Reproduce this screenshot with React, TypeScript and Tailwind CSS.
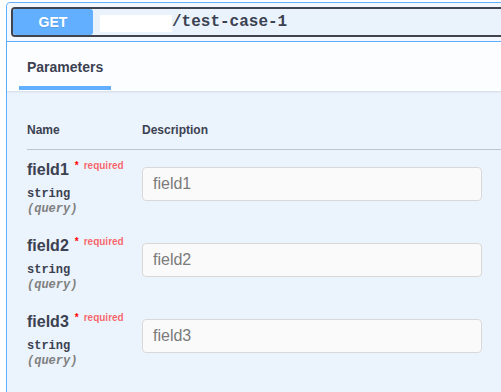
import React from "react";

const fields = ["field1", "field2", "field3"];

export default function App() {
  return (
    <div className="w-[501px] h-[392px] overflow-hidden bg-white font-['Liberation_Sans',Arial,sans-serif] text-[#3b4151]">
      <div className="pt-[2px] pl-[6px]">
        <div className="w-[600px] h-[500px] border border-[#61affe] rounded-[4px] bg-[#ebf3fc]">
          {/* summary */}
          <div className="p-[4px] bg-[#f3f8fe] border-b border-[#61affe] rounded-t-[4px]">
            <div className="h-[30px] border-2 border-[#41444e] rounded-[4px] bg-[#eaf3fc] flex items-center">
              <div className="h-full w-[80px] bg-[#61affe] rounded-[3px] flex items-center justify-center text-white font-bold text-[14px] [text-shadow:0_1px_0_rgba(0,0,0,0.1)]">
                GET
              </div>
              <div className="ml-[7px] mt-[3px] w-[72px] h-[17px] bg-white" />
              <span className="font-['Liberation_Mono',monospace] font-bold text-[16px] whitespace-nowrap">
                /test-case-1
              </span>
            </div>
          </div>

          {/* section header */}
          <div className="h-[49px] bg-[#fcfdff] shadow-[0_1px_2px_rgba(0,0,0,0.1)] px-[12px] pt-[17px] relative">
            <div className="w-[92px] flex flex-col">
              <div className="px-[8px] text-[14px] font-bold leading-[17px] whitespace-nowrap">
                Parameters
              </div>
              <div className="mt-[10px] h-[4px] bg-[#61affe]" />
            </div>
          </div>

          {/* body */}
          <div className="pt-[32px] pl-[20px]">
            <div className="flex text-[12px] font-bold leading-[15px] pb-[11px] border-b border-[#bcc3cd]">
              <div className="w-[115px]">Name</div>
              <div>Description</div>
            </div>
            {fields.map((f) => (
              <div key={f} className="h-[76px] flex">
                <div className="w-[115px] pt-[10px]">
                  <div className="text-[16px] font-bold leading-[20px] whitespace-nowrap">
                    {f}
                    <span className="text-[10px] text-[red] relative -top-[6px] pl-[6px] pr-[5px]">*</span>
                    <span className="text-[10px] text-[rgba(255,0,0,0.6)] relative -top-[6px]">required</span>
                  </div>
                  <div className="mt-[5px] font-['Liberation_Mono',monospace] text-[12px] font-bold leading-[15px]">
                    string
                  </div>
                  <div className="font-['Liberation_Mono',monospace] text-[12px] font-bold italic text-[#808080] leading-[15px]">
                    (query)
                  </div>
                </div>
                <div className="pt-[17px]">
                  <input
                    type="text"
                    placeholder={f}
                    className="block w-[340px] h-[34px] border border-[#d9d9d9] rounded-[4px] bg-[#fafafa] px-[10px] text-[16px] font-['Liberation_Sans',Arial,sans-serif] text-[#3b4151] placeholder:text-[#7b7b7b] outline-none"
                  />
                </div>
              </div>
            ))}
          </div>
        </div>
      </div>
    </div>
  );
}
